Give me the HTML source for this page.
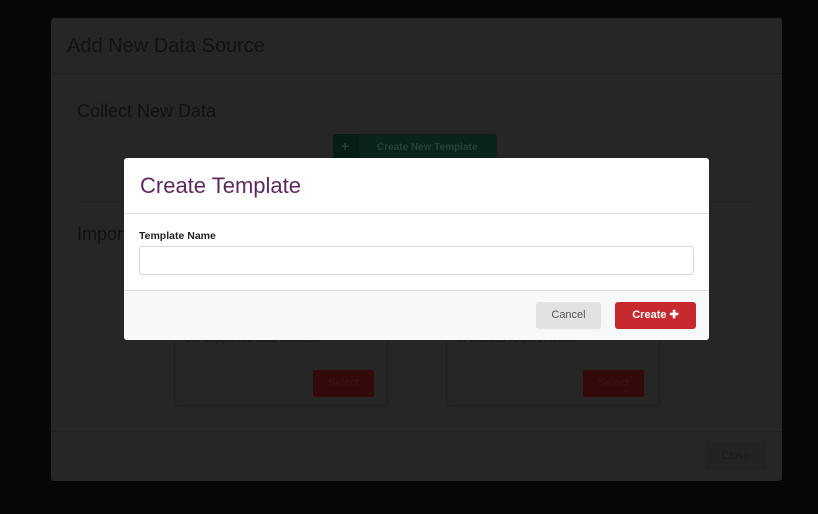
<!DOCTYPE html>
<html><head><style>
*{box-sizing:border-box;margin:0;padding:0}
body{width:818px;height:514px;background:#060606;font-family:"Liberation Sans",sans-serif;position:relative;overflow:hidden}
.a{position:absolute}
</style></head><body>
<div class="a" style="left:51px;top:18px;width:731px;height:463px;background:#262626;border-radius:3px">
 <div class="a" style="left:0;top:55px;width:731px;height:1px;background:#202020"></div>
 <div class="a" style="left:16px;top:17px;font-size:20px;color:#140f14">Add New Data Source</div>
 <div class="a" style="left:26px;top:83px;font-size:18px;color:#101010">Collect New Data</div>
 <div class="a" style="left:282px;top:116px;width:164px;height:26px;background:#0a241d;border-radius:3px">
  <div class="a" style="left:0;top:0;width:26px;height:26px;background:#081c16"></div>
  <div class="a" style="left:8px;top:4px;font-size:14px;color:#27403a;font-weight:bold">+</div>
  <div class="a" style="left:44px;top:8px;font-size:10px;color:#27403a;font-weight:bold">Create New Template</div>
 </div>
 <div class="a" style="left:26px;top:183px;width:676px;height:1px;background:#212121"></div>
 <div class="a" style="left:26px;top:206px;font-size:18px;color:#101010">Import</div>
 <div class="a" style="left:123px;top:270px;width:214px;height:118px;border:1px solid #202020;border-radius:4px">
  <div class="a" style="left:10px;top:44px;font-size:11px;color:#171717">our supported data formats.</div>
  <div class="a" style="left:138px;top:81px;width:61px;height:27px;background:#340909;border-radius:2px;color:#421515;font-size:11px;text-align:center;line-height:27px">Select</div>
 </div>
 <div class="a" style="left:395px;top:270px;width:214px;height:118px;border:1px solid #202020;border-radius:4px">
  <div class="a" style="left:10px;top:44px;font-size:11px;color:#171717">to discuss requirements.</div>
  <div class="a" style="left:136px;top:81px;width:61px;height:27px;background:#340909;border-radius:2px;color:#421515;font-size:11px;text-align:center;line-height:27px">Select</div>
 </div>
 <div class="a" style="left:0;top:413px;width:731px;height:1px;background:#202020"></div>
 <div class="a" style="left:654px;top:425px;width:61px;height:27px;background:#222424;border-radius:3px;color:#191919;font-size:11px;text-align:center;line-height:27px">Close</div>
</div>
<div class="a" style="left:124px;top:158px;width:585px;height:182px;background:#fff;border-radius:3px;overflow:hidden">
 <div class="a" style="left:16px;top:15px;font-size:22px;color:#5e2a5e">Create Template</div>
 <div class="a" style="left:0;top:55px;width:585px;height:1px;background:#e2e2e2"></div>
 <div class="a" style="left:15px;top:72px;font-size:10.5px;font-weight:bold;color:#222">Template Name</div>
 <div class="a" style="left:15px;top:88px;width:555px;height:29px;border:1px solid #d6d6d6;border-radius:3px"></div>
 <div class="a" style="left:0;top:132px;width:585px;height:50px;background:#f7f8fa;border-top:1px solid #dcdcdc"></div>
 <div class="a" style="left:412px;top:144px;width:65px;height:27px;background:#e1e2e4;border-radius:3px;color:#555;font-size:11px;text-align:center;line-height:27px">Cancel</div>
 <div class="a" style="left:491px;top:144px;width:81px;height:27px;background:#c62a2f;border-radius:3px;color:#fff;font-size:11px;font-weight:bold;text-align:center;line-height:27px">Create ✚</div>
</div>
</body></html>
